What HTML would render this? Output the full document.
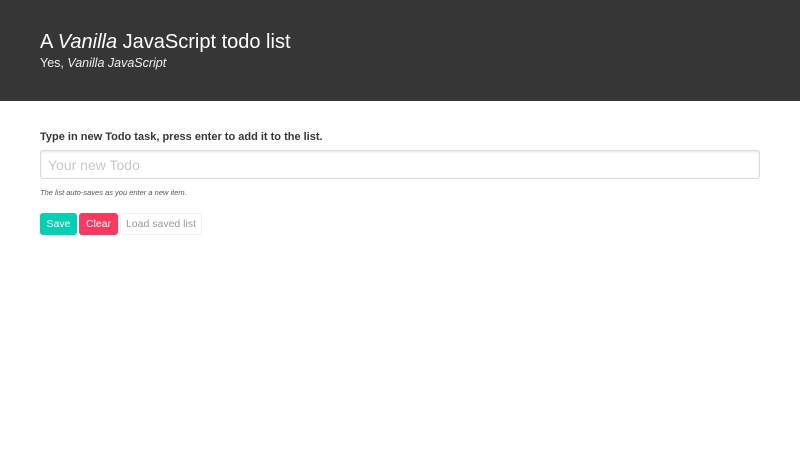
<!DOCTYPE html>
<html><head><style>
body{margin:0;width:800px;height:450px;background:#fff;font-family:"Liberation Sans",sans-serif;overflow:hidden}
.hero{background:#363636;height:101px;color:#fff;position:relative}
.t{position:absolute;left:40px;top:31px;font-size:20px}
.s{position:absolute;left:40px;top:56px;font-size:12.5px;color:#f0f0f0}
.lab{position:absolute;left:40px;top:131px;font-size:11px;font-weight:bold;color:#363636}
.in{position:absolute;left:40px;top:150px;width:718px;height:27px;border:1px solid #dbdbdb;border-radius:3px;box-shadow:inset 0 1px 2px rgba(10,10,10,.1)}
.in span{position:absolute;left:7px;top:6px;font-size:14px;color:#c8c8c8}
.help{position:absolute;left:40px;top:188px;font-size:7.5px;font-style:italic;color:#555}
.b{position:absolute;top:213px;height:22px;border-radius:3px;font-size:10.5px;line-height:22px;text-align:center}
</style></head><body>
<div class="hero"><div class="t">A <i>Vanilla</i> JavaScript todo list</div><div class="s">Yes, <i>Vanilla JavaScript</i></div></div>
<div class="lab">Type in new Todo task, press enter to add it to the list.</div>
<div class="in"><span>Your new Todo</span></div>
<div class="help">The list auto-saves as you enter a new item.</div>
<div class="b" style="left:40px;width:37px;background:#00d1b2;color:#fff">Save</div>
<div class="b" style="left:79px;width:39px;background:#ff3860;color:#fff">Clear</div>
<div class="b" style="left:120px;width:80px;border:1px solid #eee;height:20px;line-height:20px;color:#999">Load saved list</div>
</body></html>
